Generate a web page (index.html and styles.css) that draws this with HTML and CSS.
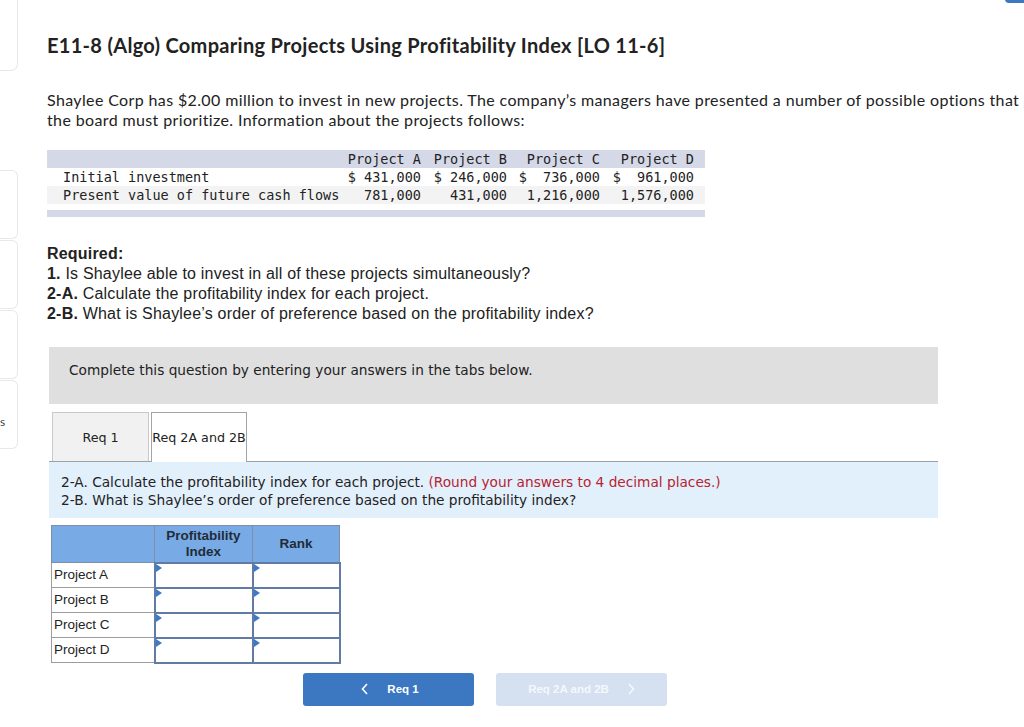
FILE: index.html
```html
<!DOCTYPE html>
<html>
<head>
<meta charset="utf-8">
<link rel="stylesheet" href="styles.css">
</head>
<body>
<div class="page">
  <aside class="side">
    <div class="card card-top"></div>
    <div class="card-group">
      <div class="card"></div>
      <div class="card"></div>
      <div class="card"></div>
      <div class="card card-last"><span class="side-s">s</span></div>
    </div>
  </aside>
  <main class="main">
    <h1 class="title">E11-8 (Algo) Comparing Projects Using Profitability Index [LO 11-6]</h1>
    <p class="intro"><span class="line">Shaylee Corp has $2.00 million to invest in new projects. The company’s managers have presented a number of possible options that</span><span class="line">the board must prioritize. Information about the projects follows:</span></p>

    <div class="data">
      <table class="data-table">
        <colgroup>
          <col class="w-label">
          <col class="w-a">
          <col class="w-b">
          <col class="w-c">
          <col class="w-d">
        </colgroup>
        <tr class="data-head">
          <td class="c-label"></td>
          <td>Project A</td>
          <td>Project B</td>
          <td>Project C</td>
          <td class="c-d">Project D</td>
        </tr>
        <tr>
          <td class="c-label">Initial investment</td>
          <td>$ 431,000</td>
          <td>$ 246,000</td>
          <td>$  736,000</td>
          <td class="c-d">$  961,000</td>
        </tr>
        <tr class="data-alt">
          <td class="c-label">Present value of future cash flows</td>
          <td>781,000</td>
          <td>431,000</td>
          <td>1,216,000</td>
          <td class="c-d">1,576,000</td>
        </tr>
      </table>
      <div class="data-foot"></div>
    </div>

    <div class="required">
      <div class="req-title">Required:</div>
      <div><b>1.</b> Is Shaylee able to invest in all of these projects simultaneously?</div>
      <div><b>2-A.</b> Calculate the profitability index for each project.</div>
      <div><b>2-B.</b> What is Shaylee’s order of preference based on the profitability index?</div>
    </div>

    <div class="question">
      <div class="prompt">Complete this question by entering your answers in the tabs below.</div>

      <div class="tabs">
        <div class="tab">Req 1</div>
        <div class="tab tab-active">Req 2A and 2B</div>
      </div>

      <div class="instructions">
        <div>2-A. Calculate the profitability index for each project. <span class="red">(Round your answers to 4 decimal places.)</span></div>
        <div>2-B. What is Shaylee’s order of preference based on the profitability index?</div>
      </div>

      <table class="answer">
        <tr class="answer-head">
          <th class="a-label"></th>
          <th class="a-pi">Profitability<br>Index</th>
          <th class="a-rank">Rank</th>
        </tr>
        <tr><td class="a-label">Project A</td><td class="a-input"><span class="mark"></span></td><td class="a-input"><span class="mark"></span></td></tr>
        <tr><td class="a-label">Project B</td><td class="a-input"><span class="mark"></span></td><td class="a-input"><span class="mark"></span></td></tr>
        <tr><td class="a-label">Project C</td><td class="a-input"><span class="mark"></span></td><td class="a-input"><span class="mark"></span></td></tr>
        <tr><td class="a-label">Project D</td><td class="a-input"><span class="mark"></span></td><td class="a-input"><span class="mark"></span></td></tr>
      </table>

      <div class="nav">
        <div class="btn btn-prev"><svg class="chev" width="8" height="12" viewBox="0 0 8 12"><path d="M6 1 L1.5 6 L6 11" fill="none" stroke="currentColor" stroke-width="1.6"/></svg><span>Req 1</span></div>
        <div class="btn btn-next"><span>Req 2A and 2B</span><svg class="chev" width="8" height="12" viewBox="0 0 8 12"><path d="M2 1 L6.5 6 L2 11" fill="none" stroke="currentColor" stroke-width="1.6"/></svg></div>
      </div>
    </div>
  </main>
</div>
<div class="corner"></div>
</body>
</html>
```

FILE: styles.css
```css
html, body {
  margin: 0;
  padding: 0;
  background: #fff;
}
body {
  font-family: "Liberation Sans", Arial, sans-serif;
  color: #222;
  width: 1024px;
  height: 727px;
  overflow: hidden;
  position: relative;
}
.page {
  display: flex;
}
.side {
  width: 18px;
  flex: none;
  display: flex;
  flex-direction: column;
}
.card {
  height: 67px;
  border: 1px solid #e8e8e8;
  border-left: none;
  border-radius: 0 6px 6px 0;
  background: #fff;
  position: relative;
}
.card + .card {
  margin-top: 1px;
}
.card-top {
  height: 70px;
  border-top: none;
  border-radius: 0 0 7px 0;
}
.card-group {
  margin-top: 99px;
}
.side-s {
  position: absolute;
  left: 0;
  top: 34px;
  font-family: "Lato", sans-serif;
  font-size: 12px;
  color: #444;
  line-height: 14px;
}
.main {
  flex: 1;
  min-width: 0;
  padding: 30px 0 0 29px;
}
.title {
  margin: 0;
  font-family: "Lato", sans-serif;
  font-weight: 700;
  font-size: 20px;
  letter-spacing: 0.3px;
  line-height: 30px;
  color: #222;
  white-space: nowrap;
}
.intro {
  margin: 30px 0 0;
  font-family: "Lato", sans-serif;
  font-size: 16px;
  letter-spacing: 0.37px;
  line-height: 19.5px;
  color: #222;
}
.intro .line {
  display: block;
  white-space: nowrap;
}
.data {
  margin-top: 21px;
  width: 658px;
}
.data-table {
  border-collapse: collapse;
  table-layout: fixed;
  width: 658px;
  font-family: "DejaVu Sans Mono", monospace;
  font-size: 13.5px;
  color: #222;
}
.w-label { width: 293px; }
.w-a { width: 81px; }
.w-b { width: 86px; }
.w-c { width: 93px; }
.w-d { width: 105px; }
.data-table td {
  padding: 1px 0 0;
  height: 17.5px;
  box-sizing: border-box;
  line-height: 17px;
  white-space: pre;
  text-align: right;
  overflow: visible;
}
.data-head td {
  background: #d4d8e7;
}
.data-alt td {
  background: #f3f3f3;
}
.data-table .c-label {
  text-align: left;
  padding-left: 16px;
}
.data-table .c-d {
  padding-right: 11px;
}
.data-foot {
  margin-top: 6px;
  height: 7px;
  background: #d4d8e7;
}
.required {
  margin-top: 27px;
  font-size: 16px;
  letter-spacing: 0.2px;
  line-height: 20px;
  color: #222;
}
.req-title {
  font-weight: 700;
}
.question {
  margin: 23px 0 0 2px;
  width: 889px;
  font-family: "DejaVu Sans", Verdana, sans-serif;
}
.prompt {
  background: #dfdfdf;
  height: 57px;
  box-sizing: border-box;
  padding: 13px 20px 0;
  font-size: 13.7px;
  line-height: 20px;
  color: #222;
}
.tabs {
  margin-top: 8px;
  display: flex;
  gap: 2px;
  padding-left: 3px;
  border-bottom: 1px solid #9aa3ab;
  height: 49px;
}
.tab {
  width: 97px;
  height: 49px;
  box-sizing: border-box;
  background: #f1f1f1;
  border: 1px solid #c9c9c9;
  border-bottom: none;
  font-size: 12.7px;
  line-height: 49px;
  text-align: center;
  color: #222;
  white-space: nowrap;
}
.tab-active {
  background: #fff;
  border-color: #a4a4a4;
  height: 50px;
  width: 96px;
  position: relative;
  z-index: 1;
  display: flex;
  justify-content: center;
  overflow: visible;
}
.instructions {
  background: #e2f0fc;
  height: 56px;
  box-sizing: border-box;
  padding: 11px 12px 0;
  font-size: 13.7px;
  line-height: 18px;
  color: #222;
}
.red {
  color: #b8232f;
}
.answer {
  margin: 7px 0 0 2px;
  border-collapse: collapse;
  table-layout: fixed;
  font-family: "Liberation Sans", Arial, sans-serif;
}
.answer th {
  background: #78aae6;
  border: 1px solid #7d8ea6;
  height: 37px;
  padding: 0;
  box-sizing: border-box;
  font-size: 13.5px;
  line-height: 16px;
  font-weight: 700;
  color: #222c38;
}
.answer .a-label {
  width: 103px;
}
.answer .a-pi {
  width: 98px;
}
.answer .a-rank {
  width: 87px;
}
.answer td {
  height: 25px;
  padding: 0;
  box-sizing: border-box;
}
.answer td.a-label {
  border: 1px solid #9d9d9d;
  font-size: 13.5px;
  line-height: 16px;
  color: #222;
  padding-left: 2px;
  padding-top: 0;
}
.answer td.a-input {
  border: 2px solid #607ca6;
  position: relative;
  background: #fff;
}
.mark {
  position: absolute;
  left: 0;
  top: 0;
  width: 0;
  height: 0;
  border-top: 4px solid transparent;
  border-bottom: 4px solid transparent;
  border-left: 6px solid #3d79c6;
}
.nav {
  margin-top: 9px;
  padding-left: 254px;
  display: flex;
  gap: 22px;
}
.btn {
  width: 171px;
  height: 33px;
  box-sizing: border-box;
  border-radius: 3px;
  display: flex;
  align-items: center;
  justify-content: center;
  gap: 18px;
  font-family: "Liberation Sans", Arial, sans-serif;
  font-weight: 700;
  font-size: 11.5px;
  color: #fff;
}
.btn-prev {
  background: #3c78c2;
  padding-left: 3px;
}
.btn-next {
  background: #d5e1f0;
  color: #f4f8fc;
}
.chev {
  display: block;
}
.corner {
  position: absolute;
  top: -30px;
  right: 0;
  width: 19px;
  height: 33px;
  border-radius: 4px 0 0 4px;
  background: #3c78c2;
}
```
